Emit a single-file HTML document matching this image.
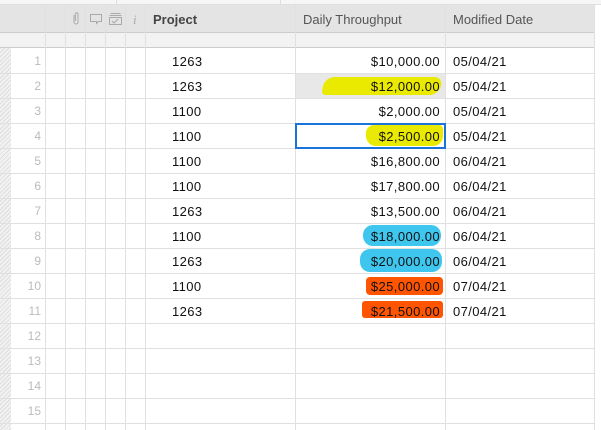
<!DOCTYPE html><html><head><style>
body{margin:0;width:601px;height:430px;overflow:hidden;background:#fff;font-family:"Liberation Sans",Arial,sans-serif;position:relative}
div{position:absolute;box-sizing:border-box}
.t{font-size:13px;color:#111;line-height:25px;white-space:nowrap}
.d{letter-spacing:0.4px}
.n{font-size:12px;color:#bbb;width:41px;text-align:right;left:0;line-height:26px}
.hl{border-radius:6px}
</style></head><body>
<div style="left:0;top:0;width:601px;height:5px;background:#f6f6f6;border-bottom:1px solid #e0e0e0"></div>
<div style="left:116px;top:0;width:1px;height:5px;background:#ddd"></div>
<div style="left:280px;top:0;width:1px;height:5px;background:#ddd"></div>
<div style="left:0;top:5px;width:595px;height:28px;background:#e4e4e4;border-bottom:1px solid #ccc"></div>
<div style="left:0;top:33px;width:595px;height:15px;background:#f2f2f2;border-bottom:1px solid #ccc"></div>
<div style="left:594px;top:5px;width:1px;height:43px;background:#d0d0d0"></div>
<div style="left:0;top:49px;width:595px;height:381px;background:#fff"></div>
<div style="left:0;top:48px;width:11px;height:382px;background:repeating-linear-gradient(135deg,#ddd 0 1px,#f2f2f2 1px 3px)"></div>
<div class="t" style="left:153px;top:7px;font-weight:bold;color:#444">Project</div>
<div class="t" style="left:303px;top:7px;color:#555">Daily Throughput</div>
<div class="t" style="left:453px;top:7px;color:#555">Modified Date</div>
<svg style="position:absolute;left:0;top:0" width="601" height="430">
<g fill="none" stroke="#aaa" stroke-width="1">
<path d="M74 15v7a2 2 0 0 0 4 0v-8a1.3 1.3 0 0 0-2.6 0v7"/>
<path d="M90.5 14.5h11v7h-3l-2 2v-2h-6z"/>
<path d="M110.5 13.5h10M109.5 15.5h12M109.5 17.5h12v7h-12z M112 21l2 2 4-4"/>
</g>
<text x="133" y="24" font-size="13" fill="#aaa" font-style="italic" font-family="Liberation Serif">i</text>
<g stroke="#e0e0e0" stroke-width="1">
<path d="M45.5 5v425M65.5 5v425M85.5 5v425M105.5 5v425M125.5 5v425M145.5 5v425M295.5 5v425M445.5 5v425M594.5 5v425"/>
<path d="M0 73.5h595M0 98.5h595M0 123.5h595M0 148.5h595M0 173.5h595M0 198.5h595M0 223.5h595M0 248.5h595M0 273.5h595M0 298.5h595M0 323.5h595M0 348.5h595M0 373.5h595M0 398.5h595M0 423.5h595"/>
</g>
</svg>
<div style="left:296px;top:74px;width:149px;height:24px;background:#e8e8e8"></div>
<div class="hl" style="left:323px;top:77px;width:118px;height:18px;background:#eaea00;border-radius:10px 8px 10px 4px;transform:skewX(-10deg)"></div>
<div class="hl" style="left:366px;top:125px;width:77px;height:21px;background:#eaea00;border-radius:8px 4px 10px 10px"></div>
<div class="hl" style="left:363px;top:225px;width:78px;height:21px;background:#3ec6ee;border-radius:10px"></div>
<div class="hl" style="left:360px;top:249px;width:82px;height:23px;background:#3ec6ee;border-radius:10px"></div>
<div class="hl" style="left:366px;top:277px;width:77px;height:18px;background:#ff5500;border-radius:4px"></div>
<div class="hl" style="left:362px;top:301px;width:81px;height:17px;background:#ff5500;border-radius:3px"></div>
<div style="left:295px;top:123px;width:151px;height:26px;border:2px solid #1a73d9"></div>
<script>
var P=["1263","1263","1100","1100","1100","1100","1263","1100","1263","1100","1263"];
var D=["$10,000.00","$12,000.00","$2,000.00","$2,500.00","$16,800.00","$17,800.00","$13,500.00","$18,000.00","$20,000.00","$25,000.00","$21,500.00"];
var M=["05/04/21","05/04/21","05/04/21","05/04/21","06/04/21","06/04/21","06/04/21","06/04/21","06/04/21","07/04/21","07/04/21"];
var h="";
for(var i=0;i<15;i++){var y=48+i*25;
h+='<div class="n" style="top:'+y+'px">'+(i+1)+'</div>';
if(i<11){h+='<div class="t d" style="left:172px;top:'+(y+1)+'px">'+P[i]+'</div>';
h+='<div class="t d" style="left:296px;width:144px;text-align:right;top:'+(y+1)+'px">'+D[i]+'</div>';
h+='<div class="t d" style="left:453px;top:'+(y+1)+'px">'+M[i]+'</div>';}}
document.body.insertAdjacentHTML('beforeend',h);
</script>
</body></html>
